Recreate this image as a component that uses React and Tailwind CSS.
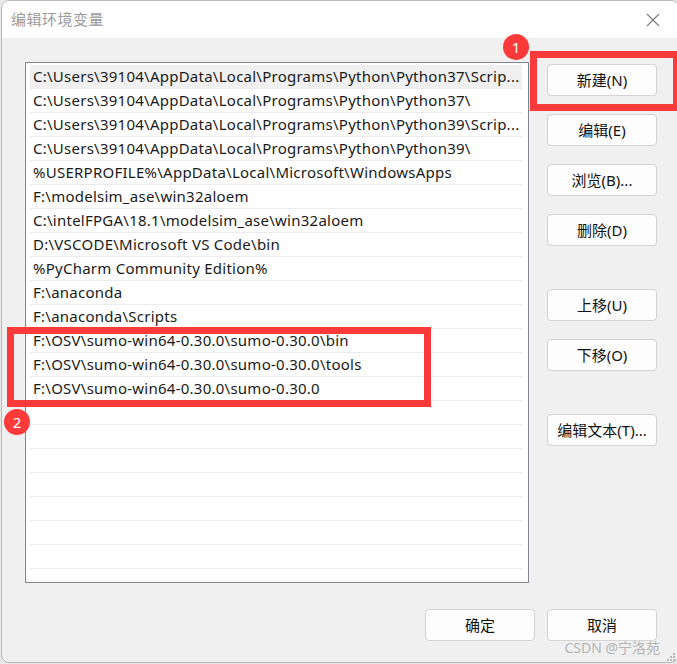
import React from "react";

const paths = [
  "C:\\Users\\39104\\AppData\\Local\\Programs\\Python\\Python37\\Scrip...",
  "C:\\Users\\39104\\AppData\\Local\\Programs\\Python\\Python37\\",
  "C:\\Users\\39104\\AppData\\Local\\Programs\\Python\\Python39\\Scrip...",
  "C:\\Users\\39104\\AppData\\Local\\Programs\\Python\\Python39\\",
  "%USERPROFILE%\\AppData\\Local\\Microsoft\\WindowsApps",
  "F:\\modelsim_ase\\win32aloem",
  "C:\\intelFPGA\\18.1\\modelsim_ase\\win32aloem",
  "D:\\VSCODE\\Microsoft VS Code\\bin",
  "%PyCharm Community Edition%",
  "F:\\anaconda",
  "F:\\anaconda\\Scripts",
  "F:\\OSV\\sumo-win64-0.30.0\\sumo-0.30.0\\bin",
  "F:\\OSV\\sumo-win64-0.30.0\\sumo-0.30.0\\tools",
  "F:\\OSV\\sumo-win64-0.30.0\\sumo-0.30.0",
  "", "", "", "", "", "", "", "",
];

const font = { fontFamily: '"Noto Sans", "Noto Sans CJK SC", sans-serif' };

// plain Windows 11 style push button
const Btn = ({ children, className = "" }) => (
  <button
    className={`w-[110px] h-[32px] bg-[#fdfdfd] border border-[#d3d3d3] rounded-[4px] text-[15px] text-[#111] flex items-center justify-center ${className}`}
  >
    {children}
  </button>
);

const Badge = ({ n, className }) => (
  <div
    className={`absolute w-[26px] h-[26px] rounded-full bg-[#fd3a3a] text-white text-[15px] flex items-center justify-center ${className}`}
  >
    {n}
  </div>
);

export default function App() {
  return (
    <div className="relative w-[677px] h-[664px] bg-[#e8e8e8] overflow-hidden" style={font}>
      <div className="absolute inset-0 left-[1px] right-[-2px] bottom-[1px] rounded-[8px] border border-[#b9b9b9] overflow-hidden flex flex-col bg-[#f0f0f0]">
        {/* title bar */}
        <div className="h-[37px] bg-white flex items-center justify-between pl-[9px] pr-[16px] shrink-0">
          <span className="text-[15px] text-[#9b9b9b] tracking-[0.5px]">编辑环境变量</span>
          <svg width="14" height="14" viewBox="0 0 14 14" className="mr-[2px]">
            <path d="M1 1 L13 13 M13 1 L1 13" stroke="#7a7a7a" strokeWidth="1.1" />
          </svg>
        </div>

        {/* body */}
        <div className="flex-1 flex flex-col pl-[23px] pt-[24px]">
          <div className="flex gap-[18px]">
            <div className="w-[504px] h-[521px] bg-white border border-[#83868c] pl-[4px] pr-[6px] pt-[2px] overflow-hidden">
              {paths.map((p, i) => (
                <div
                  key={i}
                  className={`h-[24px] border-b border-[#ececec] pl-[3px] flex items-center text-[15px] tracking-[0.25px] text-[#1a1a1a] whitespace-nowrap ${
                    i === 0 ? "bg-[#f0f0f0]" : ""
                  }`}
                >
                  {p}
                </div>
              ))}
            </div>

            <div className="flex flex-col pt-[2px]">
              <Btn>新建(N)</Btn>
              <Btn className="mt-[18px]">编辑(E)</Btn>
              <Btn className="mt-[18px]">浏览(B)...</Btn>
              <Btn className="mt-[18px]">删除(D)</Btn>
              <Btn className="mt-[43px]">上移(U)</Btn>
              <Btn className="mt-[18px]">下移(O)</Btn>
              <Btn className="mt-[43px]">编辑文本(T)...</Btn>
            </div>
          </div>

          <div className="flex justify-end gap-[12px] mt-[26px] pr-[21px]">
            <Btn>确定</Btn>
            <Btn>取消</Btn>
          </div>
        </div>
      </div>

      {/* annotations */}
      <div className="absolute left-[530px] top-[51px] w-[150px] h-[60px] border-[7px] border-[#fd3a3a]" />
      <Badge n="1" className="left-[503px] top-[34px]" />
      <div className="absolute left-[7px] top-[327px] w-[424px] h-[80px] border-[7px] border-[#fd3a3a]" />
      <Badge n="2" className="left-[4px] top-[409px]" />

      <div className="absolute right-[17px] bottom-[6px] text-[14px] text-[#b4b4b4]">CSDN @宁洛苑</div>
      <svg className="absolute right-[1px] bottom-[2px]" width="9" height="9" viewBox="0 0 9 9">
        <rect x="6" y="0" width="2" height="2" fill="#b8b8b8" />
        <rect x="3" y="3" width="2" height="2" fill="#b8b8b8" />
        <rect x="6" y="3" width="2" height="2" fill="#b8b8b8" />
        <rect x="0" y="6" width="2" height="2" fill="#b8b8b8" />
        <rect x="3" y="6" width="2" height="2" fill="#b8b8b8" />
        <rect x="6" y="6" width="2" height="2" fill="#b8b8b8" />
      </svg>
    </div>
  );
}
